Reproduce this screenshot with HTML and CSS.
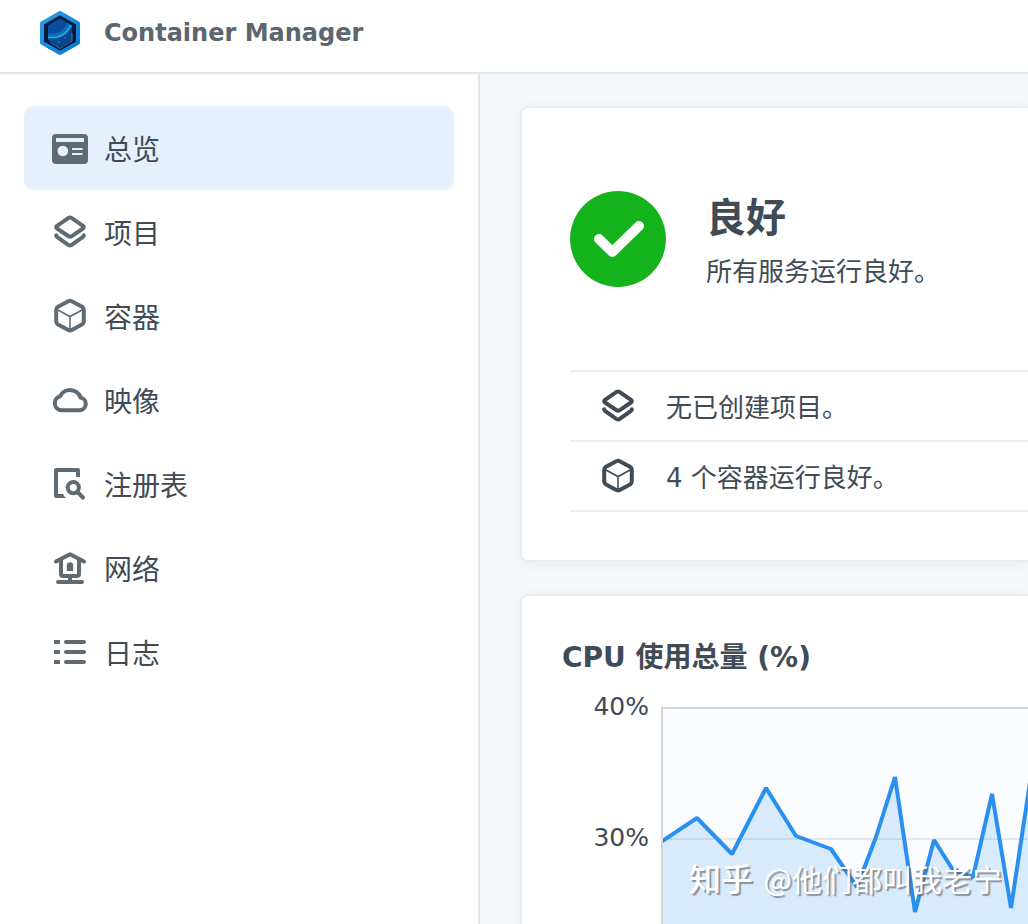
FILE: index.html
```html
<!DOCTYPE html>
<html lang="zh-CN">
  <head>
    <meta charset="UTF-8" />
    <meta name="viewport" content="width=device-width, initial-scale=1.0" />
    <title>Container Manager</title>
    <link rel="stylesheet" href="styles.css">
  </head>
  <body>
    <!-- Shared icons -->
    <svg class="icon-defs" aria-hidden="true">
      <symbol id="icon-project" viewBox="0 0 36 36">
        <path d="M16.6 3.9Q18 3 19.4 3.9L31 11.9Q32.6 13.2 31 14.5L19.4 22.3Q18 23.2 16.6 22.3L5 14.5Q3.4 13.2 5 11.9Z M4.2 21.2Q4.2 22.2 5 22.8L16.6 31.1Q18 32 19.4 31.1L31 22.8Q31.8 22.2 31.8 21.2" fill="none" stroke="currentColor" stroke-width="4" stroke-linejoin="round" stroke-linecap="round" />
      </symbol>
      <symbol id="icon-container" viewBox="0 0 36 36">
        <path d="M16.3 3.3Q18 2.4 19.7 3.3L30 8.8Q31.8 9.8 31.8 11.8V23.6Q31.8 25.6 30 26.6L19.7 32Q18 32.9 16.3 32L6 26.6Q4.2 25.6 4.2 23.6V11.8Q4.2 9.8 6 8.8Z" fill="none" stroke="currentColor" stroke-width="4" stroke-linejoin="round" />
        <path d="M5 11.5 18 18.5 31 11.5M18 18.5V32" fill="none" stroke="currentColor" stroke-width="1.6" />
      </symbol>
    </svg>

    <header class="topbar">
      <svg class="logo" viewBox="0 0 40 44" aria-hidden="true">
        <defs>
          <linearGradient id="logoRim" x1="0" y1="0" x2="1" y2="1">
            <stop offset="0" stop-color="#2a9fe0" />
            <stop offset="1" stop-color="#0878d4" />
          </linearGradient>
          <linearGradient id="logoSky" x1="0" y1="0" x2="1" y2="1">
            <stop offset="0" stop-color="#0b56ac" />
            <stop offset="1" stop-color="#063d86" />
          </linearGradient>
          <clipPath id="logoClip">
            <path d="M20 7.5 32 14.5V29L20 36.5 8 29V14.5Z" />
          </clipPath>
        </defs>
        <path d="M20 2 38 12.2V31.8L20 42 2 31.8V12.2Z" fill="#061a3c" stroke="url(#logoRim)" stroke-width="4" stroke-linejoin="round" />
        <g clip-path="url(#logoClip)">
          <path d="M6 5H34V39H6Z" fill="url(#logoSky)" />
          <path d="M6 22Q22 26 29 9L33 13Q27 30 8 27Z" fill="#0f6fb8" />
          <path d="M8 26.5Q24 28 31 14" fill="none" stroke="#2fb4d6" stroke-width="1.4" />
          <circle cx="19" cy="31" r="0.8" fill="#2b8fe0" />
          <circle cx="25" cy="27" r="0.8" fill="#2b8fe0" />
          <circle cx="17" cy="35" r="0.8" fill="#2b8fe0" />
        </g>
        <path d="M10 31 20 37.5 32 30V22" fill="none" stroke="#4aa3c4" stroke-width="0.7" />
      </svg>
      <h1 class="app-name">Container Manager</h1>
    </header>

    <div class="layout">
      <nav class="sidebar">
        <a class="nav-item active" href="#overview">
          <svg class="icon" viewBox="0 0 36 36" aria-hidden="true">
            <path fill="currentColor" fill-rule="evenodd" d="M4 4H32a4 4 0 0 1 4 4V30a4 4 0 0 1-4 4H4a4 4 0 0 1-4-4V8a4 4 0 0 1 4-4ZM4 8V12H32V8ZM10.8 15.7a5.3 5.3 0 1 0 .01 0ZM20 18V20H30.5V18ZM20 23V25H30.5V23Z" />
          </svg>
          <span>总览</span>
        </a>
        <a class="nav-item" href="#project">
          <svg class="icon" aria-hidden="true"><use href="#icon-project" /></svg>
          <span>项目</span>
        </a>
        <a class="nav-item" href="#container">
          <svg class="icon" aria-hidden="true"><use href="#icon-container" /></svg>
          <span>容器</span>
        </a>
        <a class="nav-item" href="#image">
          <svg class="icon" viewBox="0 0 36 36" aria-hidden="true">
            <path d="M9 28.3H27.5a6.4 6.4 0 0 0 1-12.7A10.8 10.2 0 0 0 8.2 14.2A7.2 7.2 0 0 0 9 28.3Z" fill="none" stroke="currentColor" stroke-width="4" stroke-linejoin="round" />
          </svg>
          <span>映像</span>
        </a>
        <a class="nav-item" href="#registry">
          <svg class="icon" viewBox="0 0 36 36" aria-hidden="true">
            <path d="M26 11V4H4V30H11.5" fill="none" stroke="currentColor" stroke-width="4" stroke-linejoin="round" />
            <path d="M10 28 14 32H10Z" fill="currentColor" />
            <circle cx="21.3" cy="21.6" r="5.6" fill="none" stroke="currentColor" stroke-width="4" />
            <path d="M25.5 26 31 31.6" fill="none" stroke="currentColor" stroke-width="4" stroke-linecap="round" />
          </svg>
          <span>注册表</span>
        </a>
        <a class="nav-item" href="#network">
          <svg class="icon" viewBox="0 0 36 36" aria-hidden="true">
            <path d="M4 11.5 18 4.2 32 11.5M9 10V24a2 2 0 0 0 2 2H25a2 2 0 0 0 2-2V10M18 26V31M6 32H30" fill="none" stroke="currentColor" stroke-width="4" stroke-linecap="round" stroke-linejoin="round" />
            <path d="M14.8 21V15.5a3.2 3.2 0 0 1 6.4 0V21Z" fill="currentColor" />
          </svg>
          <span>网络</span>
        </a>
        <a class="nav-item" href="#log">
          <svg class="icon" viewBox="0 0 36 36" aria-hidden="true">
            <path d="M2 8H8M2 18H8M2 28H8" stroke="currentColor" stroke-width="4" />
            <path d="M14 8H32M14 18H32M14 28H32" stroke="currentColor" stroke-width="4" stroke-linecap="round" />
          </svg>
          <span>日志</span>
        </a>
      </nav>

      <main class="content">
        <section class="card status-card">
          <div class="status">
            <svg class="status-icon" viewBox="0 0 96 96" aria-hidden="true">
              <circle cx="48" cy="48" r="48" fill="#15b31b" />
              <path d="M29 48 42.3 61 69 35" fill="none" stroke="#fff" stroke-width="10" stroke-linecap="round" stroke-linejoin="round" />
            </svg>
            <div class="status-info">
              <h2 class="status-title">良好</h2>
              <p class="status-text">所有服务运行良好。</p>
            </div>
          </div>
          <ul class="summary">
            <li>
              <svg class="icon" aria-hidden="true"><use href="#icon-project" /></svg>
              <span>无已创建项目。</span>
            </li>
            <li>
              <svg class="icon" aria-hidden="true"><use href="#icon-container" /></svg>
              <span>4 个容器运行良好。</span>
            </li>
          </ul>
        </section>

        <section class="card chart-card">
          <h2 class="chart-title">CPU 使用总量 (%)</h2>
          <div class="chart">
            <div class="axis">
              <span>40%</span>
              <span>30%</span>
            </div>
            <div class="plot">
              <svg class="plot-svg" aria-hidden="true">
                <path class="grid-line" d="M0 130H2000" />
                <path class="area" d="M-2 133 34 109 69 145 103 79 133 127 168 140 194 178 213 128 232 68 252 203 271 131 290 161 310 168 329 85 348 199 369 60V600H-2Z" />
                <path class="line" d="M-2 133 34 109 69 145 103 79 133 127 168 140 194 178 213 128 232 68 252 203 271 131 290 161 310 168 329 85 348 199 369 60" />
              </svg>
            </div>
          </div>
        </section>
      </main>
    </div>

    <div class="watermark"><strong>知乎</strong> @他们都叫我老宁</div>
  </body>
</html>
```

FILE: styles.css
```css
/* Base */
* {
  box-sizing: border-box;
}

body {
  margin: 0;
  height: 100vh;
  display: flex;
  flex-direction: column;
  overflow: hidden;
  position: relative;
  font-family: Verdana, "DejaVu Sans", "Noto Sans CJK SC", sans-serif;
  font-size: 26px;
  color: #414b55;
  background-color: #ffffff;
}

h1,
h2,
p,
ul {
  margin: 0;
  padding: 0;
}

.icon-defs {
  position: absolute;
  width: 0;
  height: 0;
}

.icon {
  width: 36px;
  height: 36px;
  flex: none;
}

/* Header */
.topbar {
  display: flex;
  align-items: center;
  gap: 24px;
  padding: 11px 40px 17px;
  border-bottom: 2px solid #e3e7e9;
}

.logo {
  width: 40px;
  height: 44px;
}

.app-name {
  font-size: 24px;
  line-height: 34px;
  color: #5c666e;
}

.layout {
  display: flex;
  flex: 1;
  min-height: 0;
}

/* Sidebar */
.sidebar {
  flex: none;
  width: 480px;
  padding: 32px 24px;
  border-right: 2px solid #e3e7e9;
}

.nav-item {
  display: flex;
  align-items: center;
  gap: 16px;
  height: 84px;
  padding: 0 28px;
  border-radius: 10px;
  font-size: 28px;
  color: #414b55;
  text-decoration: none;
}

.nav-item .icon {
  color: #5f6a73;
}

.nav-item.active {
  background-color: #e4f0fd;
}

/* Content */
.content {
  flex: 1;
  min-width: 0;
  padding: 32px 0 0 40px;
  background-color: #f3f7fa;
  overflow: hidden;
}

.card {
  margin-bottom: 32px;
  background-color: #ffffff;
  border: 2px solid #e9edf0;
  border-right: none;
  border-radius: 8px 0 0 8px;
  box-shadow: 0 2px 12px rgba(60, 80, 100, 0.05);
}

.status-card {
  padding: 0 0 48px 48px;
}

.status {
  display: flex;
  align-items: center;
  gap: 40px;
  height: 262px;
}

.status-icon {
  width: 96px;
  height: 96px;
}

.status-info {
  padding-top: 10px;
}

.status-title {
  font-size: 40px;
  line-height: 56px;
}

.status-text {
  line-height: 52px;
}

.summary {
  list-style: none;
  border-top: 2px solid #e9edef;
}

.summary li {
  display: flex;
  align-items: center;
  gap: 30px;
  height: 70px;
  padding-left: 30px;
  border-bottom: 2px solid #e9edef;
}

.summary span {
  padding-bottom: 2px;
}

/* CPU chart */
.chart-card {
  padding: 42px 0 40px 40px;
}

.chart-title {
  font-size: 28px;
  line-height: 40px;
}

.chart {
  display: flex;
  margin-top: 17px;
}

.axis {
  flex: none;
  width: 99px;
  padding-right: 12px;
  text-align: right;
  font-size: 25px;
  line-height: 24px;
}

.axis span {
  display: block;
  height: 131px;
}

.plot {
  flex: 1;
  height: 526px;
  margin-top: 12px;
  border-top: 2px solid #cfd6dc;
  border-left: 2px solid #cfd6dc;
  background-color: #fafcff;
  overflow: hidden;
}

.plot-svg {
  display: block;
  width: 100%;
  height: 100%;
}

.grid-line {
  stroke: #e3e8ec;
  stroke-width: 2;
}

.area {
  fill: #2a93f0;
  fill-opacity: 0.16;
}

.line {
  fill: none;
  stroke: #2a90f0;
  stroke-width: 4;
  stroke-linejoin: bevel;
}

/* Watermark over the chart */
.watermark {
  position: absolute;
  right: 26px;
  bottom: 26px;
  font-family: "Noto Sans CJK SC", sans-serif;
  font-size: 30px;
  line-height: 40px;
  color: #ffffff;
  text-shadow: 2px 2px 1px rgba(90, 90, 90, 0.6);
}

.watermark strong {
  margin-right: 4px;
  font-size: 32px;
  font-weight: 500;
}
```
